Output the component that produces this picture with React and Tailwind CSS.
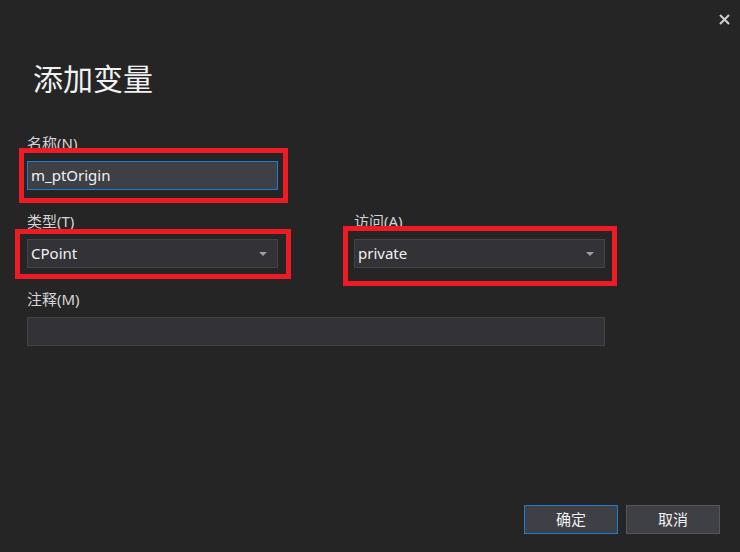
import React from 'react';

const font = { fontFamily: '"Noto Sans", "Noto Sans CJK SC", sans-serif' };

const Arrow = () => (
  <svg width="8" height="4" viewBox="0 0 8 4" className="shrink-0">
    <path d="M0 0h8L4 4z" fill="#9d9d9d" />
  </svg>
);

const Field = ({ label, children }) => (
  <div className="flex flex-col">
    <label className="h-5 text-[15px] leading-5 text-[#d4d4d4]">{label}</label>
    <div className="mt-2">{children}</div>
  </div>
);

const Select = ({ value }) => (
  <div className="flex h-[29px] items-center justify-between border border-[#434346] bg-[#333337] pl-[3px] pr-[10px] text-[15px] text-[#f1f1f1]">
    <span>{value}</span>
    <Arrow />
  </div>
);

const RedBox = ({ className }) => (
  <div className={`pointer-events-none absolute border-[5px] border-[#ed1c24] ${className}`} />
);

export default function App() {
  return (
    <div style={font} className="relative h-[552px] w-[740px] overflow-hidden bg-[#252526]">
      <button className="absolute right-[9px] top-[13px] flex h-[13px] w-[13px] items-center justify-center">
        <svg width="11" height="11" viewBox="0 0 11 11">
          <path d="M1 1l9 9M10 1l-9 9" stroke="#d0d0d0" strokeWidth="2" />
        </svg>
      </button>

      <div className="flex h-full flex-col pl-[27px] pt-[57px]">
        <h1 className="ml-[6px] text-[30px] leading-[40px] text-[#f1f1f1]" style={{ fontFamily: '"Noto Sans CJK SC", sans-serif' }}>
          添加变量
        </h1>

        <div className="mt-[36px] grid w-[578px] grid-cols-[251px_251px] gap-x-[76px] gap-y-[21px]">
          <Field label="名称(N)">
            <div className="flex h-[29px] items-center border border-[#1c7cd6] bg-[#3f3f46] pl-[3px] text-[15px] text-[#f1f1f1]">
              m_ptOrigin
            </div>
          </Field>
          <div />
          <Field label="类型(T)">
            <Select value="CPoint" />
          </Field>
          <Field label="访问(A)">
            <Select value="private" />
          </Field>
          <div className="col-span-2">
            <Field label="注释(M)">
              <div className="h-[29px] border border-[#434346] bg-[#333337]" />
            </Field>
          </div>
        </div>

        <div className="mt-auto mb-[18px] flex justify-end gap-2 pr-[20px]">
          <button className="h-[29px] w-[94px] border border-[#1c7cd6] bg-[#3f3f46] text-[15px] text-[#f1f1f1]">
            确定
          </button>
          <button className="h-[29px] w-[94px] border border-[#555555] bg-[#3f3f46] text-[15px] text-[#f1f1f1]">
            取消
          </button>
        </div>
      </div>

      <RedBox className="left-[19px] top-[148px] h-[55px] w-[269px]" />
      <RedBox className="left-[15px] top-[229px] h-[50px] w-[276px]" />
      <RedBox className="left-[343px] top-[226px] h-[60px] w-[274px]" />
    </div>
  );
}
